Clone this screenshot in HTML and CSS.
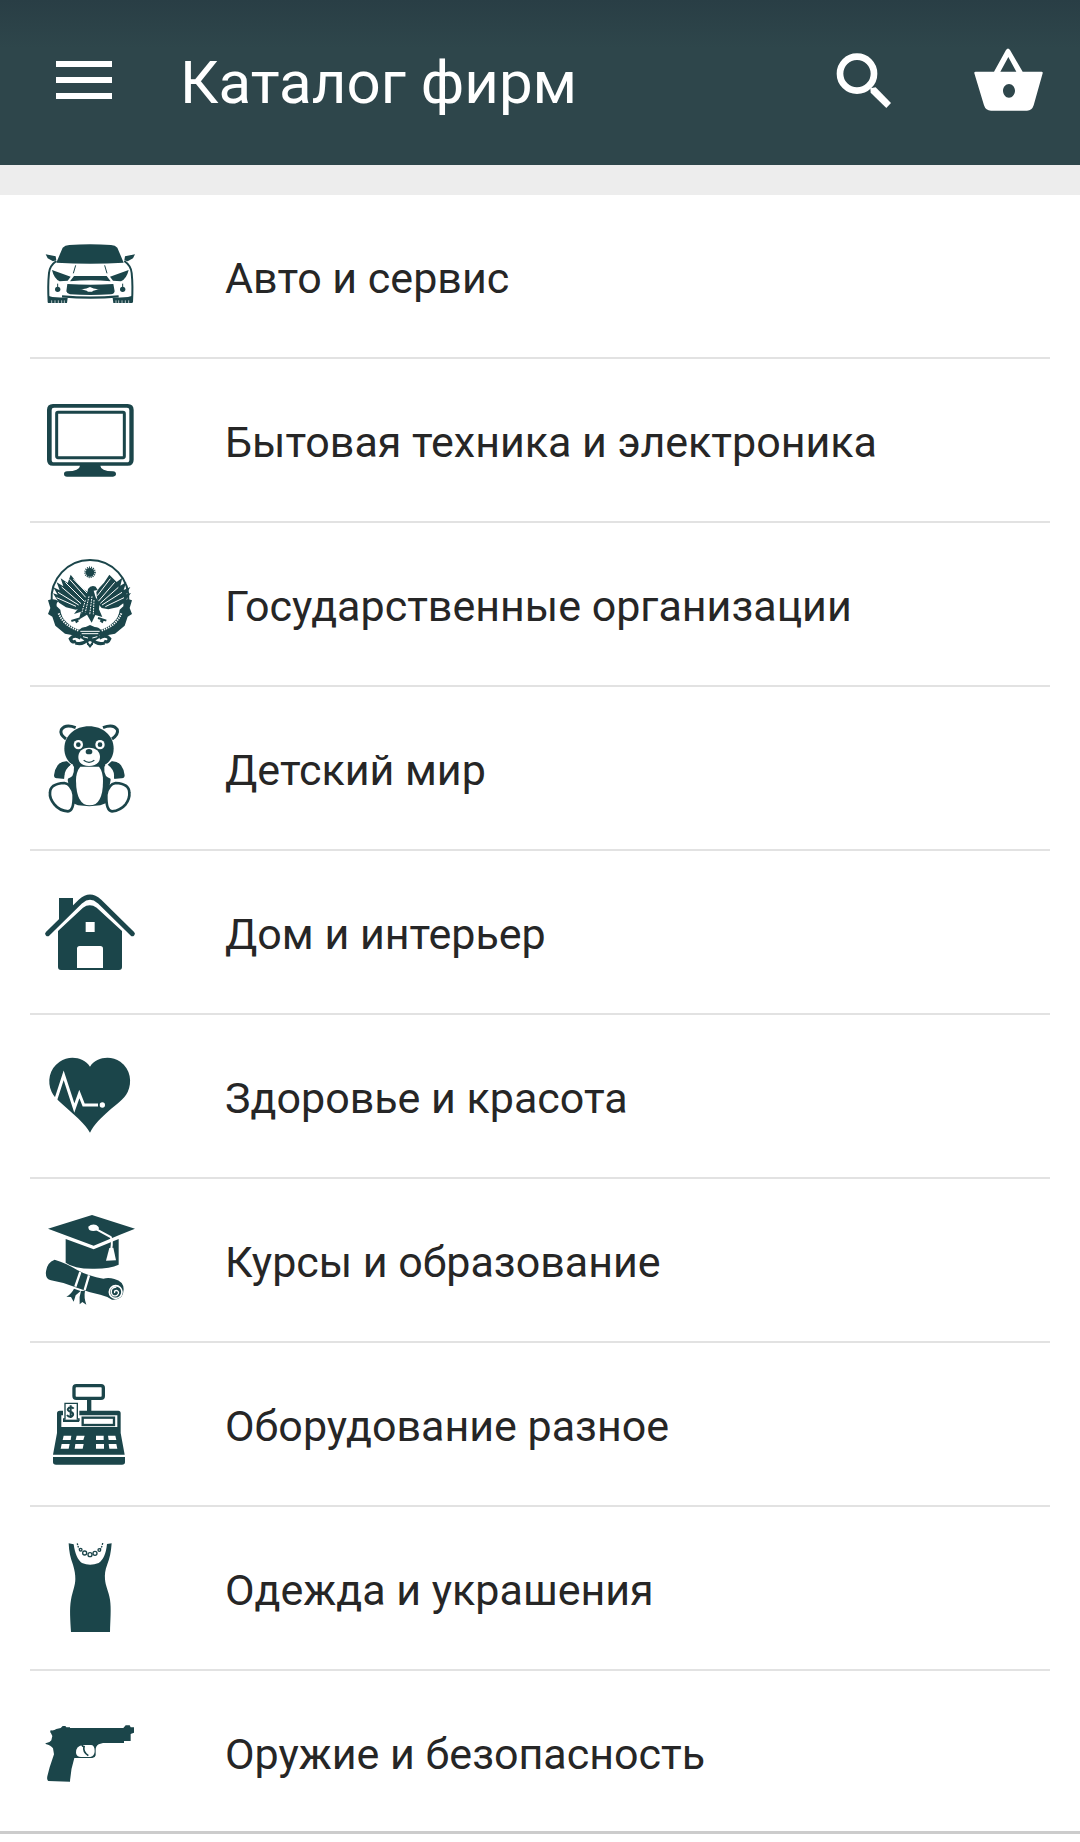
FILE: index.html
```html
<!DOCTYPE html>
<html lang="ru">
<head>
  <meta charset="UTF-8">
  <meta name="viewport" content="width=device-width, initial-scale=1.0">
  <title>Каталог фирм</title>
  <link rel="stylesheet" href="styles.css">
</head>
<body>
  <header class="topbar">
    <button class="menu-btn" type="button" aria-label="Меню">
      <svg class="icon-menu" viewBox="0 0 56 38"><path d="M0 0h56v6H0zM0 16h56v6H0zM0 32h56v6H0z"/></svg>
    </button>
    <h1>Каталог фирм</h1>
    <button class="search-btn" type="button" aria-label="Поиск">
      <svg class="icon-search" viewBox="168 156 168 168">
        <circle cx="231" cy="221" r="51" fill="none" stroke="#fff" stroke-width="20"/>
        <path d="M271 265l16-3 46 47-14 15-47-46z"/>
      </svg>
    </button>
    <a class="cart-btn" href="#cart" aria-label="Корзина">
      <svg class="icon-cart" viewBox="582 138 210 210">
        <path fill-rule="evenodd" d="M642 218l36-65q6-9 12 0l38 65h57q4 0 3 5l-27 96q-5 16-20 16H633q-16 0-21-16l-29-96q-1-5 4-5zM661 218h48l-24-44zM687 255c-10 0-18 10-18 20s8 21 18 21 18-11 18-21-8-20-18-20z"/>
      </svg>
    </a>
  </header>

  <main class="catalog">
    <ul>
      <li><a href="#auto">
        <svg class="icon" viewBox="45 15 270 270">
          <path d="M98 68q7-7 20-8 62-5 125 0 13 1 19 8l19 45q-100 6-202 0z"/>
          <path d="M47 88l30 6 2 12-10 3-16-9zM315 88l-30 6-2 12 10 3 16-9z"/>
          <path d="M79 108q-20 14-22 36-4 38-1 88M283 108q20 14 22 36 4 38 1 88" fill="none" stroke="#1b454a" stroke-width="6"/>
          <path d="M66 135l56 20-9 12-24 2q-17-8-23-34zM296 135l-56 20 9 12 24 2q17-8 23-34zM132 153h98l12 16q-61-6-122 0z"/>
          <path d="M112 177q70 5 138 0l4 22q-2 9-11 9-62 4-123 0-9-1-11-9z"/>
          <path d="M148 192q20 2 32-6 12 8 32 6-20 3-26 8h-12q-6-5-26-8z" fill="#fff"/>
          <path d="M137 121l-7 24M224 121l7 24M83 176v12M278 176v12" fill="none" stroke="#1b454a" stroke-width="3"/>
          <circle cx="83" cy="193" r="8"/><circle cx="278" cy="193" r="8"/>
          <path d="M54 212l13 4 46 3-2 15H54zM307 212l-13 4-46 3 2 15h57z"/>
          <path d="M96 214q86 8 170 0" fill="none" stroke="#1b454a" stroke-width="7"/>
          <path d="M65 226v9M75 226v9M85 226v9M95 226v9M103 226v9M258 226v9M266 226v9M276 226v9M286 226v9M296 226v9" stroke="#fff" stroke-width="2"/>
        </svg>
        <span>Авто и сервис</span>
      </a></li>
      <li><a href="#tech">
        <svg class="icon" viewBox="45 12 270 270">
          <path fill-rule="evenodd" d="M69 42h224q18 0 18 18v149q0 18-18 18h-82q1 16 38 17 9 1 9 8t-9 8H111q-9 0-9-8t9-8q38-1 39-17H69q-18 0-18-18V60q0-18 18-18zM72 53q-7 0-7 7v149q0 8 7 8h219q7 0 7-8V60q0-7-7-7z"/>
          <rect x="80" y="67" width="203" height="136" rx="4" fill="none" stroke="#1b454a" stroke-width="9"/>
        </svg>
        <span>Бытовая техника и электроника</span>
      </a></li>
      <li><a href="#gov">
        <svg class="icon" viewBox="45 24 270 270">
          <path d="M65 155a115.400 115.400 0 1 1 230 0" fill="none" stroke="#1b454a" stroke-width="6"/>
          <circle cx="180" cy="67" r="13"/>
          <circle cx="180" cy="67" r="15" fill="none" stroke="#1b454a" stroke-width="5" stroke-dasharray="3 3"/>
          <!-- wings -->
          <path d="M122 74l19 24 19 19 17 12-7 28-10 14-22 8-30-7-21-14-18-28 14 4-13-22 19 9-9-24 20 12-8-24 21 14zM238 74l-16 24-14 15-9 13 4 34 12 14 20 4 30-7 16-12 22-30-14 4 12-22-20 9 8-24-18 11 6-24-17 13z"/>
          <path d="M119 88l48 54M106 97l57 57M95 111l58 50M84 127l62 38M80 143l58 26M130 87l42 43M241 86l-39 51M254 97l-49 57M265 112l-54 48M276 127l-60 38M282 143l-56 27" fill="none" stroke="#fff" stroke-width="3"/>
          <!-- eagle -->
          <path d="M174 117q9-13 23-7l6 10-12 2 6 20 12 18-2 18 10 23-21-6-11 23-14-24-25 15 7-24-21 7 18-24 18-16z"/>
          <path d="M177 139l-11 48M186 139l-7 56M192 150l-2 43M166 151l-11 39" fill="none" stroke="#fff" stroke-width="3" stroke-dasharray="5 3"/>
          <path d="M149 205l-25 8M204 204l25 8M145 211l-8 6M211 211l8 6" fill="none" stroke="#1b454a" stroke-width="6"/>
          <!-- ribbon -->
          <path d="M54 151q18-8 32 3-8 4-6 15l11 10q2 22 18 37 18 18 42 24v20l-22-4-24-5-29-24-9-27-13-8 7-18zM306 151q-18-8-32 3 8 4 6 15l-11 10q-2 22-18 37-18 18-42 24v20l22-4 24-5 29-24 9-27 13-8-7-18z"/>
          <path d="M86 190q14 36 60 52M274 190q-14 36-60 52" fill="none" stroke="#fff" stroke-width="6" stroke-dasharray="4 3"/>
          <path d="M147 240q9-10 20-9l13-6 14 6q12 0 19 9l-6 25-14 8-13 8-15-8-12-8z"/>
          <path d="M151 244h58M155 251h50M159 260l15 4M202 260l-15 4" fill="none" stroke="#fff" stroke-width="3"/>
          <path d="M152 264q-20-12-31 2 5 14 17 8M208 264q20-12 31 2-5 14-17 8M136 279q23 6 36-9M224 279q-23 6-36-9" fill="none" stroke="#1b454a" stroke-width="10"/>
          <path d="M168 268h24l-3 15-9 11-9-11z"/>
          <path d="M174 276l6-3 6 3-6 8z" fill="#fff"/>
        </svg>
        <span>Государственные организации</span>
      </a></li>
      <li><a href="#kids">
        <svg class="icon" viewBox="45 21 270 270">
          <path d="M108 72q-20-14-14-28 12-18 43-6M246 72q20-14 16-28-12-18-43-6" fill="#fff" stroke="#1b454a" stroke-width="9"/>
          <path d="M177 34c40 0 74 27 74 67 0 35-28 55-48 58h-52c-22-3-48-23-48-58 0-40 33-67 74-67z"/>
          <path d="M111 139q-18-1-28 12-9 12-11 30 0 10 10 9l23 2q-6-26 18-43zM245 139q18-1 28 12 9 12 11 30 0 10-10 9l-23 2q6-26-18-43z"/>
          <path d="M126 150h104l12 44-13 70-18 7-33 3-34-3-18-8-13-68z"/>
          <path d="M126 146q-20 19-24 46 16 0 25-9 6-12 5-27zM228 146q20 19 25 46-16 0-25-9-7-12-5-27z" fill="#fff"/>
          <path d="M151 155h56q12 15 12 42 0 74-40 74t-41-74q0-27 13-42z" fill="#fff"/>
          <path d="M103 204q22 4 28 35 1 50-17 50-26-2-41-21-15-18-13-35 0-27 43-29zM257 204q-22 4-28 35-1 50 17 50 25-2 41-21 13-18 11-35 0-27-41-29z" fill="#fff" stroke="#1b454a" stroke-width="8"/>
          <circle cx="145" cy="89" r="14" fill="#fff"/><circle cx="145" cy="89" r="7"/>
          <circle cx="210" cy="89" r="14" fill="#fff"/><circle cx="210" cy="89" r="7"/>
          <path d="M177 98c23 0 33 13 33 28 0 19-15 27-33 27s-32-8-32-27c0-15 10-28 32-28z" fill="#fff"/>
          <ellipse cx="177" cy="110" rx="10" ry="8"/>
          <path d="M161 136q16 12 32 0" fill="none" stroke="#1b454a" stroke-width="4"/>
        </svg>
        <span>Детский мир</span>
      </a></li>
      <li><a href="#home">
        <svg class="icon" viewBox="45 3 270 270">
          <path d="M87 39h42v32l-42 40z"/>
          <path d="M53 146L152 49q28-25 56 0l99 97" fill="none" stroke="#1b454a" stroke-width="15" stroke-linecap="round"/>
          <path fill-rule="evenodd" d="M84 138l75-70q20-14 41 0l76 70v108q0 9-9 9H93q-9 0-9-9zM167 111v30h27v-30zM141 249h78v-58q0-8-8-8h-62q-8 0-8 8z"/>
        </svg>
        <span>Дом и интерьер</span>
      </a></li>
      <li><a href="#health">
        <svg class="icon" viewBox="45 15 270 270">
          <path d="M180 65c18-29 62-35 91-15 31 22 36 61 22 91-11 23-34 37-57 57-22 20-43 39-56 65-15-26-39-46-61-66-19-18-43-34-54-56-14-31-8-70 24-91 29-20 72-14 91 15z"/>
          <path d="M75 171l26-80 32 98 15-42 13 33h43" fill="none" stroke="#fff" stroke-width="9"/>
          <circle cx="217" cy="180" r="8" fill="#fff"/>
        </svg>
        <span>Здоровье и красота</span>
      </a></li>
      <li><a href="#edu">
        <svg class="icon" viewBox="45 27 270 270">
          <path d="M54 71l132-41 129 41-47 19-77 32z"/>
          <path d="M107 102l84 31 75-31v77q-27 13-79 12-56 0-80-18z"/>
          <path d="M176 68q10-9 22-5 10 6 3 11l41 22q6 10 2 34" fill="none" stroke="#fff" stroke-width="6"/>
          <ellipse cx="190" cy="70" rx="14" ry="8" fill="#fff"/>
          <path d="M238 129l12-1 8 38-30 1z" fill="#fff"/>
          <path d="M74 164q35 10 69 32 33 18 77 25 16-4 33 1 28 7 28 31 0 33-35 31-14-10-35-15-35-7-70-21-36-15-78-22-18-3-15-27 3-27 26-35z"/>
          <path d="M151 201l-15 44M177 211l-13 44" stroke="#fff" stroke-width="7"/>
          <circle cx="257" cy="261" r="19" fill="#1b454a" stroke="#fff" stroke-width="5"/>
          <path d="M259 246q-17 1-15 17 3 14 17 8 10-9-1-15-8 0-6 8" fill="none" stroke="#fff" stroke-width="4"/>
          <path d="M132 251l20 7-15 13-6 19-8-14-14-1q16-9 23-24zM153 258l12-1q-4 20 4 42l-12-8-8 7q-3-21 4-40z"/>
        </svg>
        <span>Курсы и образование</span>
      </a></li>
      <li><a href="#equipment">
        <svg class="icon" viewBox="45 9 270 270">
          <rect x="132" y="32" width="88" height="38" rx="7" fill="none" stroke="#1b454a" stroke-width="10"/>
          <path d="M171 73h13v36h-13z"/>
          <path fill-rule="evenodd" d="M89 107h176q7 0 7 8v59l12 65H69l12-65v-59q0-8 8-8zM94 121v35h168v-35z"/>
          <path d="M69 246h216v15q0 8-9 8H78q-9 0-9-8z"/>
          <path d="M99 84h49v50H99z" fill="#fff"/>
          <path d="M101 139v-7h4V85h37v47h5v7" fill="none" stroke="#1b454a" stroke-width="4"/>
          <path d="M99 134h48v7H99z"/>
          <path d="M131 101q-6-7-14-3-8 7 1 11l8 3q7 5 0 12-9 4-15-4M122 91v38" fill="none" stroke="#1b454a" stroke-width="6"/>
          <rect x="158" y="128" width="94" height="22" fill="none" stroke="#1b454a" stroke-width="7"/>
          <path d="M101 182h23l-2 13H98zM140 182h24l-4 13h-23zM198 182h23v13h-23zM234 182h22l3 13h-23zM95 207h24l-3 14H92zM136 207h25l-3 14h-24zM198 207h24v14h-24zM236 207h23l3 14h-24z" fill="#fff"/>
        </svg>
        <span>Оборудование разное</span>
      </a></li>
      <li><a href="#clothes">
        <svg class="icon" viewBox="45 21 270 270">
          <path d="M116 25l15 3c4 29 12 47 25 56q24 10 50 0c14-10 22-27 25-57l14-2c-2 26-6 46-13 63-7 18-8 30-7 45 1 19 11 36 15 61 4 27 1 60 0 97H123c-2-35-5-70 0-97 5-26 13-43 13-62 0-15-2-26-7-43-8-20-12-40-13-64z"/>
          <path d="M142 25q2 13 7 18M218 24q-2 13-8 20" fill="none" stroke="#1b454a" stroke-width="4" stroke-dasharray="5 3"/>
          <g fill="none" stroke="#1b454a" stroke-width="4"><circle cx="152" cy="44" r="4"/><circle cx="164" cy="54" r="6"/><circle cx="180" cy="59" r="6"/><circle cx="195" cy="55" r="6"/><circle cx="208" cy="45" r="4"/></g>
        </svg>
        <span>Одежда и украшения</span>
      </a></li>
      <li><a href="#security">
        <svg class="icon" viewBox="45 18 270 270">
          <path d="M63 91q10 1 16-4l13-3 6-6h8l3 4h11v2h160l7-8h12l3 6h10v16l-10 4v21h-20v6h-63l-13 4q-9 5-9 17v16q-1 7-10 8h-54q-11 34-13 71l-65-2q-5-2-3-14l7-27 13-39-3-18q-6-9-22-13v-3q11 1 17-8l3-13-4-8q-4-3-1-9z"/>
          <path d="M158 135q-21 3-20 24 2 12 15 12h28q13-3 13-18 0-16-10-18z" fill="#fff"/>
          <path d="M156 135q1 4 6 5-4 15 13 27" fill="none" stroke="#1b454a" stroke-width="5"/>
        </svg>
        <span>Оружие и безопасность</span>
      </a></li>
    </ul>
  </main>
</body>
</html>
```
FILE: styles.css
```css
* { box-sizing: border-box; }
body { margin: 0; font-family: Roboto, 'Noto Sans', sans-serif; background: #fff; color: #262626; }
.topbar { display: flex; align-items: center; height: 165px; padding: 0 36px 6px 56px; background: linear-gradient(#293e45, #2e464b 48px); color: #fff; }
.topbar svg { display: block; fill: #fff; }
.topbar button { padding: 0; border: none; background: none; cursor: pointer; }
.icon-menu { width: 56px; height: 38px; }
.icon-search { width: 56px; height: 56px; }
.icon-cart { width: 70px; height: 70px; }
h1 { flex: 1; margin: 0; padding: 6px 0 0 68px; font-size: 60px; font-weight: 400; line-height: 72px; }
.search-btn { margin-right: 82px; }
.catalog { border-top: 30px solid #ededed; }
.catalog ul { margin: 0; padding: 0 30px; list-style: none; }
.catalog li { border-bottom: 2px solid #e2e2e2; }
.catalog a { display: flex; align-items: center; gap: 90px; height: 162px; padding: 0 15px 2px; color: inherit; font-size: 43px; line-height: 56px; text-decoration: none; }
.catalog li:last-child { margin: 0 -30px; padding: 0 30px; border-bottom: 3px solid #ccc; }
.catalog li:last-child a { height: 160px; padding-bottom: 0; }
.icon { flex: none; width: 90px; height: 90px; fill: #1b454a; overflow: visible; }
.catalog span { padding-top: 6px; }
```
